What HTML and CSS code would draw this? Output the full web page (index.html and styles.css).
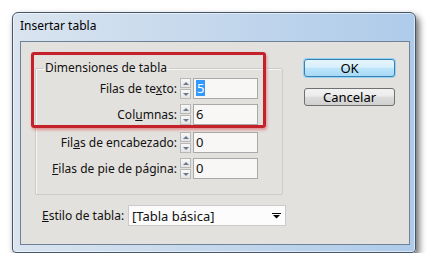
FILE: index.html
```html
<!DOCTYPE html>
<html lang="es">
<head>
  <meta charset="UTF-8">
  <title>Insertar tabla</title>
  <link rel="stylesheet" href="styles.css">
</head>
<body>
  <div class="screen">
    <div class="window">
      <div class="titlebar">Insertar tabla</div>
      <div class="client">
        <div class="left">
          <fieldset class="group">
            <legend>Dimensiones de tabla</legend>
            <div class="rows">
              <div class="row">
                <label>Filas de te<u>x</u>to:</label>
                <span class="spin"><i class="up"></i><i class="down"></i></span>
                <span class="field"><span class="sel">5</span></span>
              </div>
              <div class="row">
                <label>Col<u>u</u>mnas:</label>
                <span class="spin"><i class="up"></i><i class="down"></i></span>
                <span class="field">6</span>
              </div>
              <div class="row row-three">
                <label>Fil<u>a</u>s de encabezado:</label>
                <span class="spin"><i class="up"></i><i class="down"></i></span>
                <span class="field">0</span>
              </div>
              <div class="row">
                <label><u>F</u>ilas de pie de página:</label>
                <span class="spin"><i class="up"></i><i class="down"></i></span>
                <span class="field">0</span>
              </div>
            </div>
          </fieldset>
          <div class="style-row">
            <label><u>E</u>stilo de tabla:</label>
            <div class="select">
              <span>[Tabla básica]</span>
              <svg width="9" height="6" viewBox="0 0 9 6"><rect x="0" y="0" width="9" height="1" fill="#000"/><polygon points="1,2 8,2 4.5,5.5" fill="#000"/></svg>
            </div>
          </div>
        </div>
        <div class="buttons">
          <button class="btn btn-default">OK</button>
          <button class="btn">Cancelar</button>
        </div>
        <!-- marca roja de la captura -->
        <div class="highlight"></div>
      </div>
    </div>
  </div>
</body>
</html>
```

FILE: styles.css
```css
/* página */
body {
  margin: 0;
  background: #fff;
  font-family: "Noto Sans", "Liberation Sans", sans-serif;
  font-size: 12px;
  color: #111;
}
.screen {
  padding: 12px 0 0 12px;
}

/* ventana */
.window {
  width: 402px;
  height: 239px;
  border: 1px solid #46566a;
  border-radius: 6px 6px 4px 4px;
  background: linear-gradient(to right, #d9e4ef 0%, #c4d7ec 50%, #aecbea 100%);
  box-shadow: inset 0 0 0 1px rgba(255,255,255,0.55), 3px 4px 7px rgba(0,0,0,0.6);
  display: flex;
  flex-direction: column;
}
.titlebar {
  height: 28px;
  line-height: 26px;
  padding-left: 7px;
  color: #000;
}
.client {
  position: relative;
  margin: 0 5px 7px 7px;
  flex: 1;
  border: 1px solid #6f8196;
  background: #e3e1de;
  display: flex;
  align-items: flex-start;
}

/* columna izquierda */
.left {
  padding: 18px 0 0 14px;
}
.group {
  margin: 0;
  width: 246px;
  padding: 2px 0 15px 0;
  border: 1px solid #cbcbcb;
  border-radius: 2px;
  box-shadow: inset 1px 1px 0 #f6f6f6;
}
.group legend {
  margin-left: 7px;
  padding: 0 2px;
  line-height: 16px;
}
.rows {
  display: flex;
  flex-direction: column;
  gap: 5px;
}
.row {
  display: flex;
  align-items: center;
  height: 21px;
}
.row-three {
  margin-top: 2px;
}
.row label {
  width: 141px;
  text-align: right;
}
.spin {
  width: 11px;
  height: 21px;
  margin-left: 3px;
  display: flex;
  flex-direction: column;
  gap: 1px;
}
.spin i {
  flex: 1;
  border: 1px solid #b8b8b8;
  background: linear-gradient(#f8f8f8, #e4e4e4);
  position: relative;
}
.spin i::after {
  content: "";
  position: absolute;
  left: 1.5px;
  top: 3px;
  border-left: 3px solid transparent;
  border-right: 3px solid transparent;
}
.spin .up::after {
  border-bottom: 3px solid #6a7890;
}
.spin .down::after {
  border-top: 3px solid #6a7890;
}
.field {
  width: 61px;
  height: 19px;
  margin-left: 2px;
  border: 1px solid #a9a9a9;
  background: #f8f7f5;
  line-height: 19px;
  padding-left: 2px;
  font-size: 13px;
}
.sel {
  display: inline-block;
  background: #3399ff;
  color: #fff;
  padding: 0 1px;
  line-height: 16px;
}

/* estilo de tabla */
.style-row {
  display: flex;
  align-items: center;
  margin: 10px 0 0 7px;
}
.style-row label {
  width: 86px;
}
.select {
  width: 149px;
  height: 19px;
  border: 1px solid #cacaca;
  background: #fcfcfc;
  display: flex;
  align-items: center;
  justify-content: space-between;
  padding: 0 4px 0 3px;
  font-size: 13px;
}

/* botones */
.buttons {
  margin: 17px 0 0 18px;
  display: flex;
  flex-direction: column;
  gap: 11px;
}
.btn {
  width: 91px;
  height: 18px;
  padding: 0;
  font: inherit;
  font-size: 13px;
  line-height: 14px;
  color: #000;
  border: 1px solid #707070;
  border-radius: 3px;
  background: linear-gradient(#f3f3f3 0%, #ebebeb 45%, #dddddd 50%, #cfcfcf 100%);
}
.btn-default {
  border-color: #3c7fb1;
  background: linear-gradient(#e6f5fd 0%, #d9f0fc 45%, #bee6fd 50%, #a7d9f5 100%);
  box-shadow: 0 0 0 1px #8ed3f4;
}

/* recuadro rojo */
.highlight {
  position: absolute;
  left: 10px;
  top: 10px;
  width: 229px;
  height: 70px;
  border: 3px solid #c4222a;
  border-radius: 3px;
  box-shadow: 1px 2px 3px rgba(220, 70, 70, 0.5), inset 0 0 1px rgba(255,150,150,0.6);
}
```
